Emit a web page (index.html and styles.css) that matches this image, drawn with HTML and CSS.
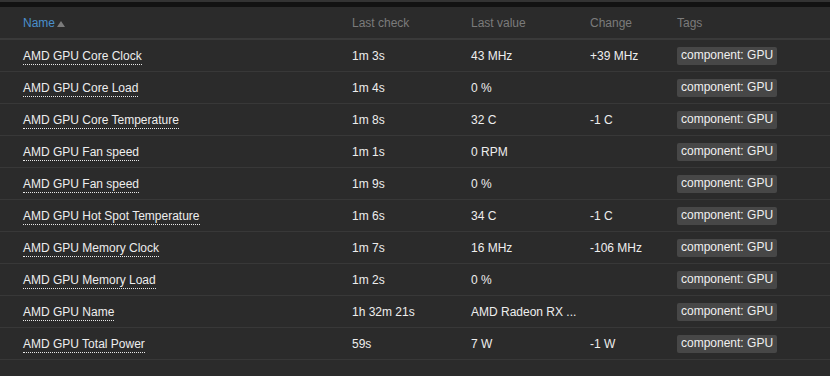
FILE: index.html
```
<!DOCTYPE html>
<html>
<head>
<meta charset="utf-8">
<link rel="stylesheet" href="styles.css">
</head>
<body>
<div class="topline"></div>
<div class="topband"></div>
<table class="grid">
  <colgroup>
    <col class="c-name"><col class="c-check"><col class="c-value"><col class="c-change"><col class="c-tags">
  </colgroup>
  <thead>
    <tr>
      <th class="first sorted">Name<span class="arrow"></span></th>
      <th>Last check</th>
      <th>Last value</th>
      <th>Change</th>
      <th>Tags</th>
    </tr>
  </thead>
  <tbody>
    <tr><td class="first"><span class="link">AMD GPU Core Clock</span></td><td>1m 3s</td><td>43 MHz</td><td>+39 MHz</td><td><span class="tag">component: GPU</span></td></tr>
    <tr><td class="first"><span class="link">AMD GPU Core Load</span></td><td>1m 4s</td><td>0 %</td><td></td><td><span class="tag">component: GPU</span></td></tr>
    <tr><td class="first"><span class="link">AMD GPU Core Temperature</span></td><td>1m 8s</td><td>32 C</td><td>-1 C</td><td><span class="tag">component: GPU</span></td></tr>
    <tr><td class="first"><span class="link">AMD GPU Fan speed</span></td><td>1m 1s</td><td>0 RPM</td><td></td><td><span class="tag">component: GPU</span></td></tr>
    <tr><td class="first"><span class="link">AMD GPU Fan speed</span></td><td>1m 9s</td><td>0 %</td><td></td><td><span class="tag">component: GPU</span></td></tr>
    <tr><td class="first"><span class="link">AMD GPU Hot Spot Temperature</span></td><td>1m 6s</td><td>34 C</td><td>-1 C</td><td><span class="tag">component: GPU</span></td></tr>
    <tr><td class="first"><span class="link">AMD GPU Memory Clock</span></td><td>1m 7s</td><td>16 MHz</td><td>-106 MHz</td><td><span class="tag">component: GPU</span></td></tr>
    <tr><td class="first"><span class="link">AMD GPU Memory Load</span></td><td>1m 2s</td><td>0 %</td><td></td><td><span class="tag">component: GPU</span></td></tr>
    <tr><td class="first"><span class="link">AMD GPU Name</span></td><td>1h 32m 21s</td><td>AMD Radeon RX ...</td><td></td><td><span class="tag">component: GPU</span></td></tr>
    <tr><td class="first"><span class="link">AMD GPU Total Power</span></td><td>59s</td><td>7 W</td><td>-1 W</td><td><span class="tag">component: GPU</span></td></tr>
  </tbody>
</table>
</body>
</html>
```
FILE: styles.css
```
html, body {
  margin: 0;
  padding: 0;
  background: #2b2b2b;
  font-family: "Liberation Sans", Arial, sans-serif;
  font-size: 12px;
  color: #eeeeee;
}
.topline {
  height: 2px;
  background: #333333;
}
.topband {
  height: 5px;
  background: #121212;
}
.grid {
  width: 100%;
  border-collapse: collapse;
  table-layout: fixed;
}
.c-name { width: 352px; }
.c-check { width: 119px; }
.c-value { width: 119px; }
.c-change { width: 87px; }
.grid th {
  height: 31px;
  padding: 0;
  text-align: left;
  font-weight: normal;
  color: #7b7b7b;
  border-bottom: 2px solid #3a3a3a;
  vertical-align: middle;
  white-space: nowrap;
}
.grid th.sorted {
  color: #4a8fcc;
}
.arrow {
  display: inline-block;
  width: 0;
  height: 0;
  margin-left: 2px;
  border-left: 4px solid transparent;
  border-right: 4px solid transparent;
  border-bottom: 6px solid #7b7b7b;
  vertical-align: 0;
}
.grid td {
  height: 31px;
  padding: 0;
  border-bottom: 1px solid #383838;
  vertical-align: middle;
  white-space: nowrap;
}
.grid .first {
  padding-left: 23px;
}
.link {
  border-bottom: 1px dotted #e8e8e8;
  padding-bottom: 1px;
}
.tag {
  display: inline-block;
  background: #474747;
  color: #f0f0f0;
  padding: 2px 4px 3px 4px;
  border-radius: 2px;
  line-height: 13px;
  vertical-align: middle;
}
```
